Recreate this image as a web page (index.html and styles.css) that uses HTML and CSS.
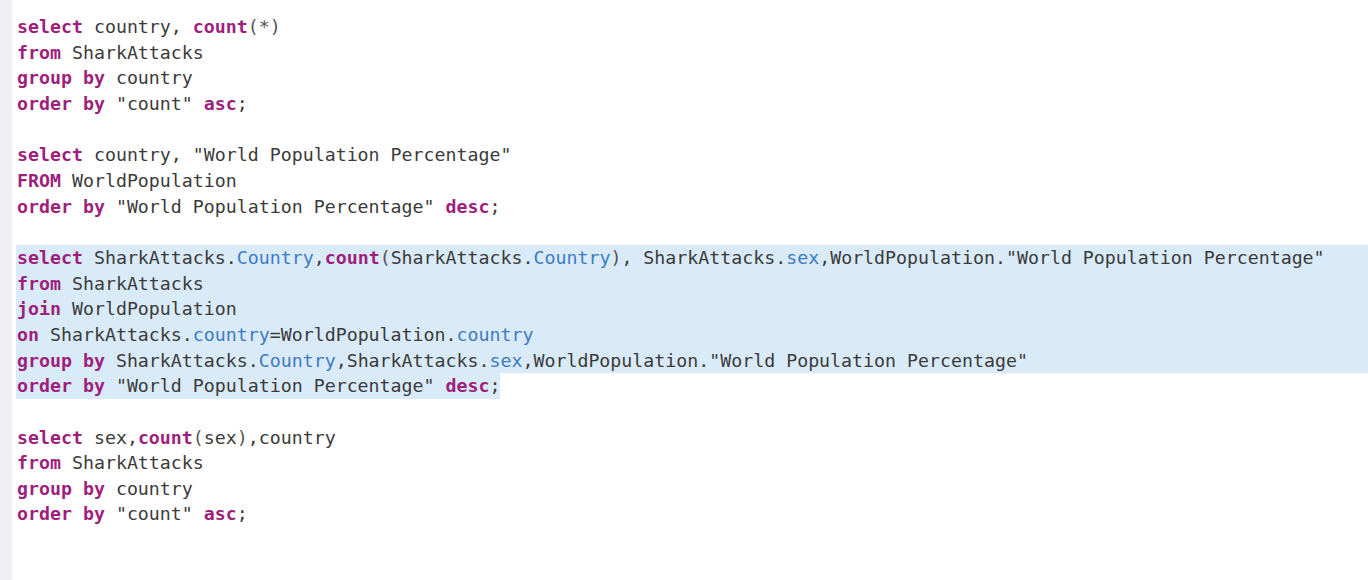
FILE: index.html
```html
<!DOCTYPE html>
<html>
<head>
<meta charset="utf-8">
<link rel="stylesheet" href="styles.css">
</head>
<body>
<div class="editor">
  <div class="gutter"></div>
  <div class="code">
    <div class="line"><span class="k">select</span> country, <span class="k">count</span><span class="p">(*)</span></div>
    <div class="line"><span class="k">from</span> SharkAttacks</div>
    <div class="line"><span class="k">group by</span> country</div>
    <div class="line"><span class="k">order by</span> "count" <span class="k">asc</span>;</div>
    <div class="line"></div>
    <div class="line"><span class="k">select</span> country, "World Population Percentage"</div>
    <div class="line"><span class="k">FROM</span> WorldPopulation</div>
    <div class="line"><span class="k">order by</span> "World Population Percentage" <span class="k">desc</span>;</div>
    <div class="line"></div>
    <div class="line sel"><span class="k">select</span> SharkAttacks.<span class="c">Country</span>,<span class="k">count</span><span class="p">(</span>SharkAttacks.<span class="c">Country</span><span class="p">)</span>, SharkAttacks.<span class="c">sex</span>,WorldPopulation."World Population Percentage"</div>
    <div class="line sel"><span class="k">from</span> SharkAttacks</div>
    <div class="line sel"><span class="k">join</span> WorldPopulation</div>
    <div class="line sel"><span class="k">on</span> SharkAttacks.<span class="c">country</span>=WorldPopulation.<span class="c">country</span></div>
    <div class="line sel"><span class="k">group by</span> SharkAttacks.<span class="c">Country</span>,SharkAttacks.<span class="c">sex</span>,WorldPopulation."World Population Percentage"</div>
    <div class="line"><span class="selpart"><span class="k">order by</span> "World Population Percentage" <span class="k">desc</span>;</span></div>
    <div class="line"></div>
    <div class="line"><span class="k">select</span> sex,<span class="k">count</span><span class="p">(</span>sex<span class="p">)</span>,country</div>
    <div class="line"><span class="k">from</span> SharkAttacks</div>
    <div class="line"><span class="k">group by</span> country</div>
    <div class="line"><span class="k">order by</span> "count" <span class="k">asc</span>;</div>
  </div>
</div>
</body>
</html>
```
FILE: styles.css
```css
html, body {
  margin: 0;
  padding: 0;
  background: #ffffff;
  height: 100%;
  overflow: hidden;
}
.editor {
  display: flex;
  height: 580px;
}
.gutter {
  width: 12px;
  flex: none;
  background: #eef0f4;
}
.code {
  flex: 1;
  padding: 14px 0 0 4px;
  font-family: "DejaVu Sans Mono", monospace;
  font-size: 18.25px;
  line-height: 25.67px;
  color: #3b3b3b;
}
.line {
  height: 25.67px;
  padding-left: 1px;
  white-space: pre;
}
.sel {
  background: #d9eaf8;
}
.selpart {
  background: #d9eaf8;
  display: inline-block;
  margin-left: -1px;
  padding-left: 1px;
}
.k {
  color: #9e1f7c;
  font-weight: bold;
}
.c {
  color: #3d7cc4;
}
.p {
  color: #555555;
}
```
